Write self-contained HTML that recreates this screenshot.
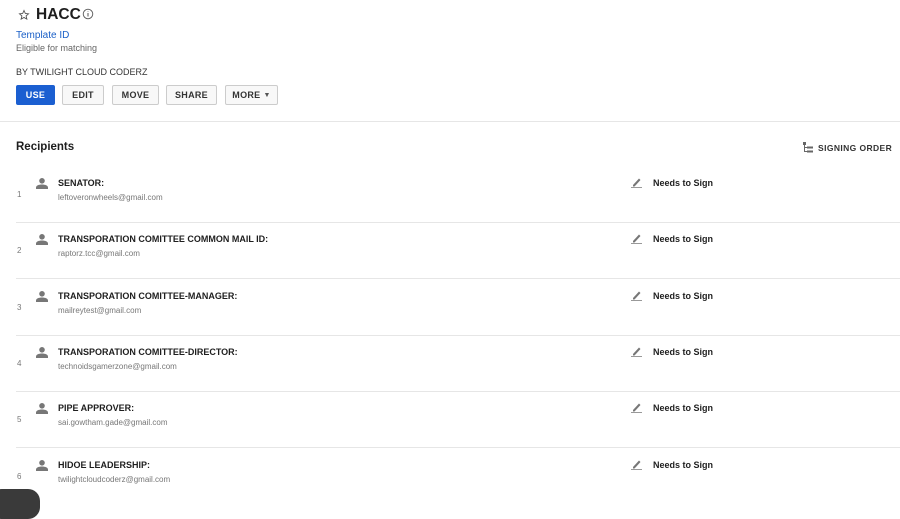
<!DOCTYPE html>
<html><head><style>
*{margin:0;padding:0;box-sizing:border-box}
body{width:900px;height:503px;background:#fff;font-family:"Liberation Sans",Arial,sans-serif;color:#1e1e1e;position:relative;overflow:hidden}
.a{position:absolute}
.btn{position:absolute;top:85px;height:20px;border:1px solid #ccc;background:#f8f8f8;font-size:9px;font-weight:bold;letter-spacing:.3px;display:flex;align-items:center;justify-content:center;color:#333;border-radius:2px}
.name{font-size:9px;font-weight:bold;color:#1e1e1e}
.mail{font-size:8px;color:#777}
.num{font-size:8px;color:#777}
.hr{position:absolute;left:16px;right:0;height:1px;background:#e6e6e6}
.ns{font-size:9px;font-weight:bold}
</style></head><body>
<svg class="a" style="left:18px;top:9px" width="12" height="12" viewBox="0 0 24 24"><path d="M12 3l2.7 6 6.3.6-4.8 4.2 1.5 6.4L12 16.9 6.3 20.2l1.5-6.4L3 9.6 9.3 9z" fill="none" stroke="#555" stroke-width="1.8"/></svg>
<div class="a" style="left:36px;top:6px;font-size:15.5px;font-weight:bold">HACC</div>
<svg class="a" style="left:82px;top:8px" width="12" height="12" viewBox="0 0 24 24"><circle cx="12" cy="12" r="9.5" fill="none" stroke="#666" stroke-width="2"/><path d="M12 10v7M12 7v1" stroke="#666" stroke-width="2.2"/></svg>
<div class="a" style="left:16px;top:30px;font-size:10px;color:#1a5fc7">Template ID</div>
<div class="a" style="left:16px;top:43px;font-size:9px;color:#666">Eligible for matching</div>
<div class="a" style="left:16px;top:67px;font-size:9px;color:#333">BY TWILIGHT CLOUD CODERZ</div>
<div class="btn" style="left:16px;width:39px;background:#1b5fd1;border-color:#1b5fd1;color:#fff">USE</div>
<div class="btn" style="left:62px;width:42px">EDIT</div>
<div class="btn" style="left:112px;width:47px">MOVE</div>
<div class="btn" style="left:166px;width:51px">SHARE</div>
<div class="btn" style="left:225px;width:53px">MORE <span style="font-size:7px;margin-left:3px;color:#555">▼</span></div>
<div class="a" style="left:0;right:0;top:121px;height:1px;background:#e6e6e6"></div>
<div class="a" style="left:16px;top:141px;font-size:11.5px;font-weight:bold">Recipients</div>
<svg class="a" style="left:803px;top:142px" width="10" height="11" viewBox="0 0 10 11"><rect x="0" y="0" width="3" height="3" fill="#666"/><path d="M1.5 3v6.5H4M1.5 5.5H4" stroke="#666" fill="none"/><rect x="4" y="4.5" width="6" height="2" fill="#666"/><rect x="4" y="8.5" width="6" height="2" fill="#666"/></svg>
<div class="a" style="left:818px;top:143px;font-size:8.5px;font-weight:bold;letter-spacing:.4px;color:#333">SIGNING ORDER</div>

<div id="rows"></div>
<script>
var r=[["SENATOR:","leftoveronwheels@gmail.com"],["TRANSPORATION COMITTEE COMMON MAIL ID:","raptorz.tcc@gmail.com"],["TRANSPORATION COMITTEE-MANAGER:","mailreytest@gmail.com"],["TRANSPORATION COMITTEE-DIRECTOR:","technoidsgamerzone@gmail.com"],["PIPE APPROVER:","sai.gowtham.gade@gmail.com"],["HIDOE LEADERSHIP:","twilightcloudcoderz@gmail.com"]];
var h="";
for(var i=0;i<6;i++){var y=178+i*56.3;
h+='<svg class="a" style="left:36px;top:'+(y)+'px" width="12" height="11" viewBox="0 0 12 11"><circle cx="6" cy="2.8" r="2.8" fill="#777"/><path d="M0 11v-1.5C0 7.5 3 6.5 6 6.5s6 1 6 3V11z" fill="#777"/></svg>';
h+='<div class="a name" style="left:58px;top:'+(y)+'px">'+r[i][0]+'</div>';
h+='<div class="a mail" style="left:58px;top:'+(y+15)+'px">'+r[i][1]+'</div>';
h+='<div class="a num" style="left:17px;top:'+(y+12)+'px">'+(i+1)+'</div>';
h+='<svg class="a" style="left:631px;top:'+(y-1)+'px" width="12" height="11" viewBox="0 0 12 11"><path d="M2 8L8 1.5l1.5 1.5L3.5 9.5H2z" fill="#777"/><path d="M0 10.5h11" stroke="#999"/></svg>';
h+='<div class="a ns" style="left:653px;top:'+(y)+'px">Needs to Sign</div>';
if(i<5)h+='<div class="hr" style="top:'+(y+44)+'px"></div>';}
document.getElementById("rows").innerHTML=h;
</script>
<div class="a" style="left:-10px;top:489px;width:50px;height:30px;background:#3a3a3a;border-radius:12px"></div>
</body></html>
